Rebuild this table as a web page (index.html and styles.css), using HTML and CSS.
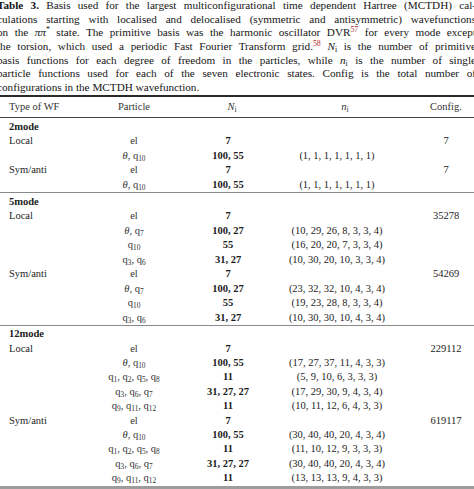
FILE: index.html
```html
<!DOCTYPE html>
<html>
<head>
<meta charset="utf-8">
<link rel="stylesheet" href="styles.css">
</head>
<body>
<div class="page">
  <div class="caption">
    <p class="ln"><b>Table 3.</b> Basis used for the largest multiconfigurational time dependent Hartree (MCTDH) cal-</p>
    <p class="ln">culations starting with localised and delocalised (symmetric and antisymmetric) wavefunctions</p>
    <p class="ln">on the <i>ππ</i><sup class="st">*</sup> state. The primitive basis was the harmonic oscillator DVR<sup class="ref">57</sup> for every mode except</p>
    <p class="ln">the torsion, which used a periodic Fast Fourier Transform grid.<sup class="ref">58</sup> <i>N</i><sub>i</sub> is the number of primitive</p>
    <p class="ln">basis functions for each degree of freedom in the particles, while <i>n</i><sub>i</sub> is the number of single</p>
    <p class="ln">particle functions used for each of the seven electronic states. Config is the total number of</p>
    <p class="ln last">configurations in the MCTDH wavefunction.</p>
  </div>

  <div class="rule-top"></div>
  <div class="row head">
    <span class="c1">Type of WF</span>
    <span class="c2">Particle</span>
    <span class="c3 hN"><i>N</i><sub>i</sub></span>
    <span class="c4 hn"><i>n</i><sub>i</sub></span>
    <span class="c5">Config.</span>
  </div>
  <div class="rule-head"></div>

  <div class="group g1">
    <div class="row"><span class="c1 mode">2mode</span></div>
    <div class="row"><span class="c1">Local</span><span class="c2">el</span><span class="c3">7</span><span class="c4"></span><span class="c5">7</span></div>
    <div class="row"><span class="c1"></span><span class="c2"><i>θ</i>, q<sub>10</sub></span><span class="c3">100, 55</span><span class="c4">(1, 1, 1, 1, 1, 1, 1)</span><span class="c5"></span></div>
    <div class="row"><span class="c1">Sym/anti</span><span class="c2">el</span><span class="c3">7</span><span class="c4"></span><span class="c5">7</span></div>
    <div class="row"><span class="c1"></span><span class="c2"><i>θ</i>, q<sub>10</sub></span><span class="c3">100, 55</span><span class="c4">(1, 1, 1, 1, 1, 1, 1)</span><span class="c5"></span></div>
  </div>
  <div class="rule-sep"></div>

  <div class="group g2">
    <div class="row"><span class="c1 mode">5mode</span></div>
    <div class="row"><span class="c1">Local</span><span class="c2">el</span><span class="c3">7</span><span class="c4"></span><span class="c5">35278</span></div>
    <div class="row"><span class="c1"></span><span class="c2"><i>θ</i>, q<sub>7</sub></span><span class="c3">100, 27</span><span class="c4">(10, 29, 26, 8, 3, 3, 4)</span><span class="c5"></span></div>
    <div class="row"><span class="c1"></span><span class="c2">q<sub>10</sub></span><span class="c3">55</span><span class="c4">(16, 20, 20, 7, 3, 3, 4)</span><span class="c5"></span></div>
    <div class="row"><span class="c1"></span><span class="c2">q<sub>3</sub>, q<sub>6</sub></span><span class="c3">31, 27</span><span class="c4">(10, 30, 20, 10, 3, 3, 4)</span><span class="c5"></span></div>
    <div class="row"><span class="c1">Sym/anti</span><span class="c2">el</span><span class="c3">7</span><span class="c4"></span><span class="c5">54269</span></div>
    <div class="row"><span class="c1"></span><span class="c2"><i>θ</i>, q<sub>7</sub></span><span class="c3">100, 27</span><span class="c4">(23, 32, 32, 10, 4, 3, 4)</span><span class="c5"></span></div>
    <div class="row"><span class="c1"></span><span class="c2">q<sub>10</sub></span><span class="c3">55</span><span class="c4">(19, 23, 28, 8, 3, 3, 4)</span><span class="c5"></span></div>
    <div class="row"><span class="c1"></span><span class="c2">q<sub>3</sub>, q<sub>6</sub></span><span class="c3">31, 27</span><span class="c4">(10, 30, 30, 10, 4, 3, 4)</span><span class="c5"></span></div>
  </div>
  <div class="rule-sep"></div>

  <div class="group g3">
    <div class="row"><span class="c1 mode">12mode</span></div>
    <div class="row"><span class="c1">Local</span><span class="c2">el</span><span class="c3">7</span><span class="c4"></span><span class="c5">229112</span></div>
    <div class="row"><span class="c1"></span><span class="c2"><i>θ</i>, q<sub>10</sub></span><span class="c3">100, 55</span><span class="c4">(17, 27, 37, 11, 4, 3, 3)</span><span class="c5"></span></div>
    <div class="row"><span class="c1"></span><span class="c2">q<sub>1</sub>, q<sub>2</sub>, q<sub>5</sub>, q<sub>8</sub></span><span class="c3">11</span><span class="c4">(5, 9, 10, 6, 3, 3, 3)</span><span class="c5"></span></div>
    <div class="row"><span class="c1"></span><span class="c2">q<sub>3</sub>, q<sub>6</sub>, q<sub>7</sub></span><span class="c3">31, 27, 27</span><span class="c4">(17, 29, 30, 9, 4, 3, 4)</span><span class="c5"></span></div>
    <div class="row"><span class="c1"></span><span class="c2">q<sub>9</sub>, q<sub>11</sub>, q<sub>12</sub></span><span class="c3">11</span><span class="c4">(10, 11, 12, 6, 4, 3, 3)</span><span class="c5"></span></div>
    <div class="row"><span class="c1">Sym/anti</span><span class="c2">el</span><span class="c3">7</span><span class="c4"></span><span class="c5">619117</span></div>
    <div class="row"><span class="c1"></span><span class="c2"><i>θ</i>, q<sub>10</sub></span><span class="c3">100, 55</span><span class="c4">(30, 40, 40, 20, 4, 3, 4)</span><span class="c5"></span></div>
    <div class="row"><span class="c1"></span><span class="c2">q<sub>1</sub>, q<sub>2</sub>, q<sub>5</sub>, q<sub>8</sub></span><span class="c3">11</span><span class="c4">(11, 10, 12, 9, 3, 3, 3)</span><span class="c5"></span></div>
    <div class="row"><span class="c1"></span><span class="c2">q<sub>3</sub>, q<sub>6</sub>, q<sub>7</sub></span><span class="c3">31, 27, 27</span><span class="c4">(30, 40, 40, 20, 4, 3, 4)</span><span class="c5"></span></div>
    <div class="row"><span class="c1"></span><span class="c2">q<sub>9</sub>, q<sub>11</sub>, q<sub>12</sub></span><span class="c3">11</span><span class="c4">(13, 13, 13, 9, 4, 3, 3)</span><span class="c5"></span></div>
  </div>
  <div class="rule-bottom"></div>
</div>
</body>
</html>
```

FILE: styles.css
```css
html, body {
  margin: 0;
  padding: 0;
  background: #ffffff;
}
.page {
  width: 474px;
  height: 489px;
  overflow: hidden;
  font-family: "Liberation Serif", "Times New Roman", serif;
  color: #1c1c1c;
}
.caption {
  padding-top: 0;
  margin: -1px 0 0 -3px;
  width: 479px;
  font-size: 11.2px;
  line-height: 13.7px;
  color: #161616;
}
.ln {
  margin: 0;
  height: 13.7px;
  text-align: justify;
  text-align-last: justify;
}
.ln.last {
  text-align: left;
  text-align-last: left;
}
.ln sup, .ln sub {
  line-height: 0;
  font-size: 70%;
}
.ln sup {
  vertical-align: 0.45em;
}
.ln sub {
  vertical-align: -0.2em;
}
.ref {
  color: #b0282c;
}
.rule-top {
  height: 2px;
  background: #2a2a2a;
}
.rule-head {
  height: 1px;
  background: #444444;
}
.rule-sep {
  height: 1px;
  background: #8a8a8a;
}
.rule-bottom {
  height: 4px;
  background: #9c9c9c;
}
.row {
  display: grid;
  grid-template-columns: 95px 78px 110px 108px 83px;
  height: 14.5px;
  line-height: 14.5px;
  font-size: 10.5px;
  white-space: nowrap;
}
.row.head {
  height: 20px;
  line-height: 20px;
  color: #333333;
}
.c1 {
  padding-left: 9px;
}
.c2, .c3, .c4 {
  text-align: center;
}
.c5 {
  padding-left: 27px;
  text-align: center;
}
.hN {
  padding-left: 8px;
}
.hn {
  padding-left: 16px;
}
.c3 {
  font-weight: bold;
}
.head .c3 {
  font-weight: normal;
}
.mode {
  font-weight: bold;
}
.c2 {
  color: #333333;
}
.row sub {
  font-size: 70%;
  line-height: 0;
  vertical-align: -0.25em;
}
.g1 {
  padding-top: 2px;
}
.g2 {
  padding-top: 1.5px;
}
.g3 {
  padding-top: 1px;
}
.g3 .row {
  height: 14.4px;
  line-height: 14.4px;
}
```
